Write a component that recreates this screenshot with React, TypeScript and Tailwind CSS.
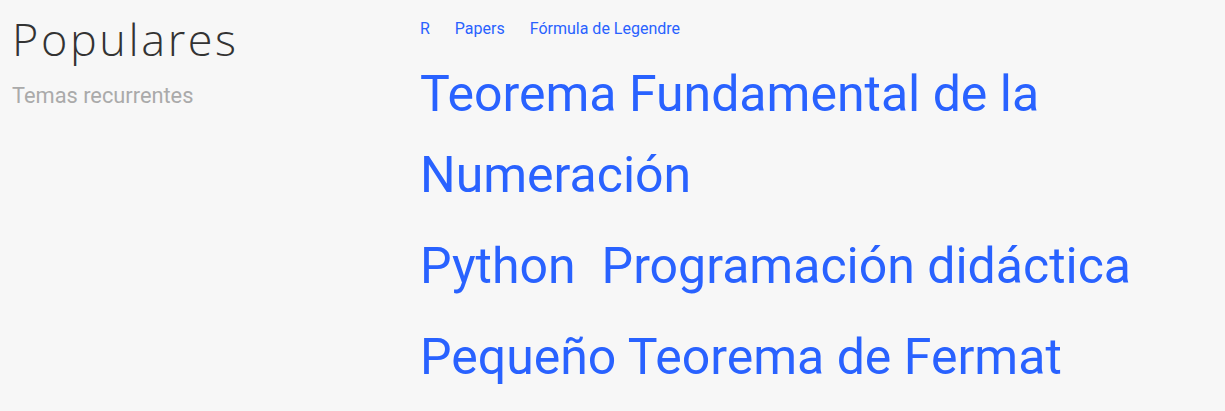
export default function App() {
  const big = [
    "Teorema Fundamental de la Numeración",
    "Python",
    "Programación didáctica",
    "Pequeño Teorema de Fermat",
  ];
  return (
    <div className="min-h-[411px] w-full bg-[#f7f7f7] font-['Roboto',sans-serif]">
      <div className="grid grid-cols-[408px_1fr]">
        <div className="px-3 pt-[12px]">
          <h2 className="font-['Open_Sans',sans-serif] text-[45px] font-light leading-[54px] tracking-[2.6px] text-[#333]">
            Populares
          </h2>
          <p className="mt-[17px] text-[21.8px] leading-[26px] text-[#aaa]">Temas recurrentes</p>
        </div>
        <div className="px-3 pt-[17px]">
          <div className="flex gap-[25px] text-[16px] leading-[24px] text-[#2962ff]">
            <a href="#">R</a>
            <a href="#">Papers</a>
            <a href="#">Fórmula de Legendre</a>
          </div>
          <div className="mt-[13px] text-[50px] leading-[81px] text-[#2962ff]">
            {big.map((t, i) => (
              <a key={i} href="#" className="mr-[26px] inline-block mb-[10px]">
                {t}
              </a>
            ))}
          </div>
        </div>
      </div>
    </div>
  );
}
